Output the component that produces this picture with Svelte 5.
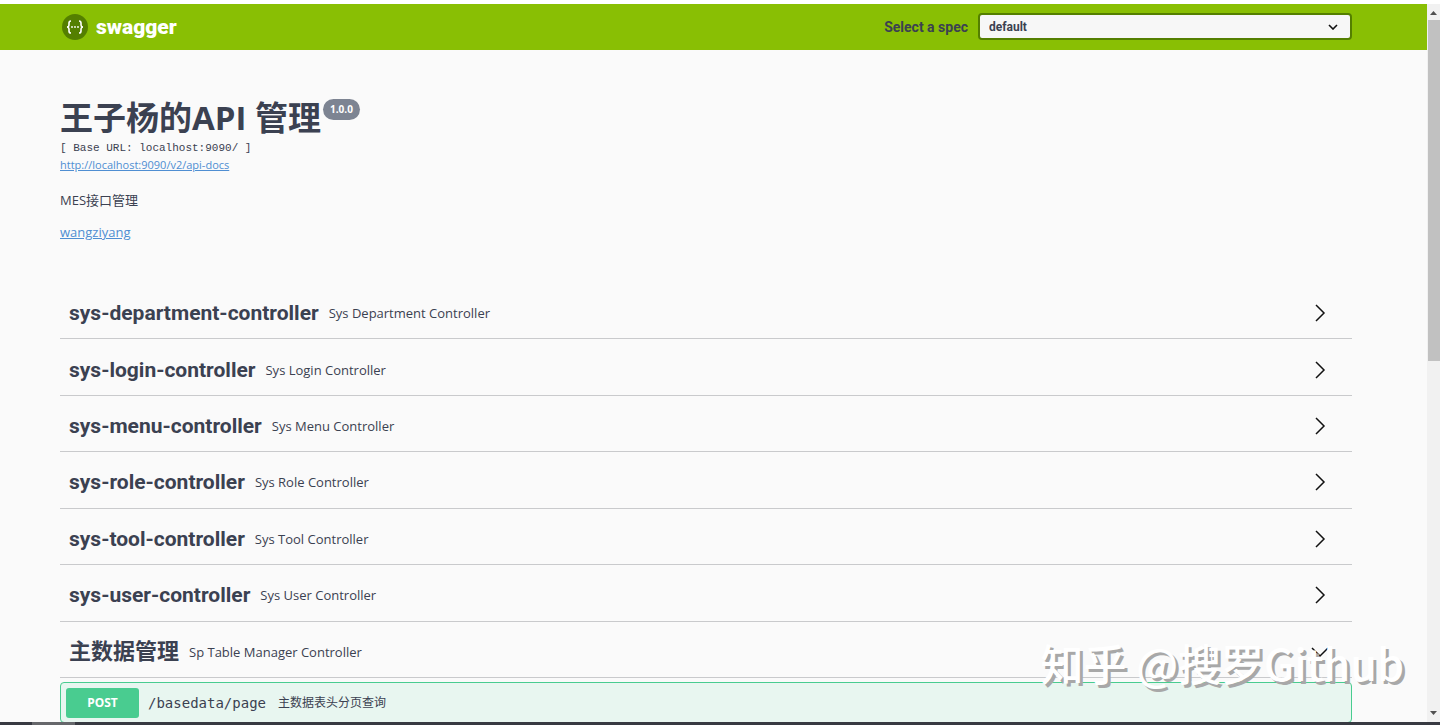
<script lang="ts">
	interface Tag {
		name: string;
		description: string;
		lang?: string;
		open: boolean;
		operations: { method: string; path: string; summary: string }[];
	}

	let spec = $state('default');

	let tags = $state<Tag[]>([
		{ name: 'sys-department-controller', description: 'Sys Department Controller', open: false, operations: [] },
		{ name: 'sys-login-controller', description: 'Sys Login Controller', open: false, operations: [] },
		{ name: 'sys-menu-controller', description: 'Sys Menu Controller', open: false, operations: [] },
		{ name: 'sys-role-controller', description: 'Sys Role Controller', open: false, operations: [] },
		{ name: 'sys-tool-controller', description: 'Sys Tool Controller', open: false, operations: [] },
		{ name: 'sys-user-controller', description: 'Sys User Controller', open: false, operations: [] },
		{
			name: '主数据管理',
			description: 'Sp Table Manager Controller',
			lang: 'zh',
			open: true,
			operations: [{ method: 'POST', path: '/basedata/page', summary: '主数据表头分页查询' }]
		}
	]);

	const operations = $derived(tags.filter((t) => t.open).flatMap((t) => t.operations));
</script>

<div class="window">
	<div class="view">
		<div class="page">
			<header class="topbar">
				<a class="brand" href="#top">
					<svg width="26" height="26" viewBox="0 0 26 26" aria-hidden="true">
						<circle cx="13" cy="13" r="13" fill="#547f00" />
						<g fill="none" stroke="#fff" stroke-width="1.6">
							<path d="M9 7C7.1 7 7 7.8 7 9.100v1.800c0 1.300-.5 1.900-1.900 2.100 1.400.2 1.900.8 1.900 2.100v1.800c0 1.300.1 2.100 2 2.100" />
							<path d="M17 7c1.900 0 2 .8 2 2.100v1.800c0 1.300.5 1.900 1.900 2.100-1.400.2-1.900.8-1.900 2.100v1.800c0 1.300-.1 2.100-2 2.100" />
						</g>
						<g fill="#fff">
							<circle cx="10" cy="13" r="0.9" />
							<circle cx="13" cy="13" r="0.9" />
							<circle cx="16" cy="13" r="0.9" />
						</g>
					</svg>
					<span>swagger</span>
				</a>
				<label class="spec">
					<span>Select a spec</span>
					<span class="select">
						<select bind:value={spec}>
							<option value="default">default</option>
						</select>
						<svg width="10" height="6" viewBox="0 0 10 6" aria-hidden="true">
							<path d="M1 1l4 4 4-4" fill="none" stroke="#111" stroke-width="1.6" />
						</svg>
					</span>
				</label>
			</header>

			<main>
				<section class="info">
					<h1>王子杨的API 管理<span class="version">1.0.0</span></h1>
					<pre>[ Base URL: localhost:9090/ ]</pre>
					<a class="docs" href="http://localhost:9090/v2/api-docs">http://localhost:9090/v2/api-docs</a>
					<p>MES接口管理</p>
					<a class="contact" href="#contact">wangziyang</a>
				</section>

				<div class="tags">
					{#each tags as tag}
						<div class="tag">
							<h2 lang={tag.lang}>{tag.name}</h2>
							<span class="description">{tag.description}</span>
							<button
								class="toggle"
								class:open={tag.open}
								aria-label="Toggle {tag.name}"
								aria-expanded={tag.open}
								onclick={() => (tag.open = !tag.open)}
							>
								<svg width="18" height="18" viewBox="0 0 18 18" aria-hidden="true">
									<path d="M5 1l8 8-8 8" fill="none" stroke="#111" stroke-width="1.5" />
								</svg>
							</button>
						</div>
					{/each}
				</div>

				{#each operations as op}
					<button class="operation">
						<span class="method">{op.method}</span>
						<span class="path">{op.path}</span>
						<span class="summary">{op.summary}</span>
					</button>
				{/each}
			</main>
		</div>

		<div class="scrollbar" aria-hidden="true">
			<svg width="7" height="4" viewBox="0 0 7 4"><path d="M0 4l3.5-4L7 4z" fill="#505050" /></svg>
			<div class="track"><div class="thumb"></div></div>
			<svg width="7" height="4" viewBox="0 0 7 4"><path d="M0 0l3.5 4L7 0z" fill="#505050" /></svg>
		</div>
	</div>
	<div class="taskbar"><div class="task"></div></div>
	<div class="watermark">知乎 @搜罗Github</div>
</div>

<style>
	:global(body) {
		margin: 0;
		background: #fafafa;
	}

	.window {
		position: relative;
		display: flex;
		flex-direction: column;
		box-sizing: border-box;
		height: 100vh;
		overflow: hidden;
		border-top: 4px solid #fff;
		color: #3b4151;
		font-family: 'Open Sans', 'Noto Sans CJK SC', sans-serif;
	}

	.view {
		display: flex;
		flex: 1;
		min-height: 0;
	}

	.page {
		flex: 1;
		min-width: 0;
		overflow: hidden;
	}

	.topbar {
		display: flex;
		align-items: center;
		justify-content: space-between;
		box-sizing: border-box;
		height: 46px;
		padding: 0 75px 1px 62px;
		background: #89bf04;
		font-family: Roboto, sans-serif;
		font-weight: 700;
	}

	.brand {
		display: flex;
		align-items: center;
		gap: 8px;
		color: #fff;
		font-size: 21px;
		font-weight: 900;
		line-height: 28px;
		text-decoration: none;
	}

	.spec {
		display: flex;
		align-items: center;
		gap: 10px;
		font-size: 14px;
	}

	.select {
		display: grid;
		align-items: center;
		width: 374px;
	}

	.select > * {
		grid-area: 1 / 1;
	}

	.select svg {
		justify-self: end;
		margin-right: 14px;
		pointer-events: none;
	}

	select {
		appearance: none;
		height: 27px;
		padding: 0 9px;
		border: 2px solid #547f00;
		border-radius: 4px;
		background: #f7f7f7;
		color: #3b4151;
		font: 700 12px Roboto, sans-serif;
	}

	main {
		padding: 0 75px 0 60px;
	}

	.info {
		display: flex;
		flex-direction: column;
		align-items: flex-start;
		box-sizing: border-box;
		min-height: 233px;
		padding-top: 46px;
	}

	h1 {
		display: flex;
		align-items: flex-start;
		gap: 2px;
		margin: 0;
		font-size: 33px;
		line-height: 44px;
	}

	.version {
		margin-top: 3px;
		padding: 0 7px;
		border-radius: 11px;
		background: #7d8492;
		color: #fff;
		font-size: 10px;
		line-height: 21px;
	}

	pre {
		margin: 0;
		font: 11px/16px 'Liberation Mono', monospace;
	}

	.docs {
		font-size: 11px;
		line-height: 18px;
	}

	.contact {
		font-size: 13px;
		line-height: 20px;
	}

	.info a {
		color: #4f8ed2;
	}

	p {
		margin: 16px 0 12px;
		font-size: 13px;
		line-height: 20px;
	}

	.tags {
		display: grid;
		grid-auto-rows: 1fr;
		min-height: 395px;
	}

	.tag {
		display: flex;
		align-items: center;
		gap: 10px;
		padding: 5px 23px 0 9px;
		border-bottom: 1px solid #c9cacc;
	}

	h2 {
		margin: 0;
		font: 700 21px/30px Roboto, 'Noto Sans CJK SC', sans-serif;
	}

	h2:lang(zh) {
		font-size: 22px;
	}

	.description {
		flex: 1;
		font-size: 13px;
	}

	.toggle {
		display: flex;
		padding: 0;
		border: none;
		background: none;
		cursor: pointer;
	}

	.toggle.open svg {
		transform: rotate(90deg);
	}

	.operation {
		display: flex;
		align-items: center;
		box-sizing: border-box;
		width: 100%;
		height: 41px;
		margin-top: 4px;
		padding: 0 5px;
		border: 1px solid #49cc90;
		border-radius: 4px;
		background: #e8f6f0;
		color: #3b4151;
	}

	.method {
		width: 73px;
		margin-right: 9px;
		border-radius: 3px;
		background: #49cc90;
		color: #fff;
		font: 700 12px/30px 'Noto Sans', sans-serif;
	}

	.path {
		margin-right: 12px;
		font: 14px/20px 'DejaVu Sans Mono', monospace;
	}

	.summary {
		font: 12px/20px 'Open Sans', 'Noto Sans CJK SC', sans-serif;
	}

	.scrollbar {
		display: flex;
		flex-direction: column;
		align-items: center;
		justify-content: space-between;
		width: 13px;
		padding: 7px 0;
		background: #f1f1f1;
	}

	.track {
		flex: 1;
		width: 12px;
		margin: 5px 0 9px 1px;
	}

	.thumb {
		height: 50%;
		background: #c1c1c1;
	}

	.taskbar {
		height: 3px;
		padding-left: 32px;
		background: #383a42;
	}

	.task {
		width: 43px;
		height: 3px;
		background: #66676b;
	}

	.watermark {
		position: absolute;
		right: 36px;
		bottom: 33px;
		color: #fff;
		font: 500 43px/60px 'Noto Sans CJK SC', sans-serif;
		text-shadow: 3px 3px 0 #a8a8a8;
		pointer-events: none;
	}
</style>
